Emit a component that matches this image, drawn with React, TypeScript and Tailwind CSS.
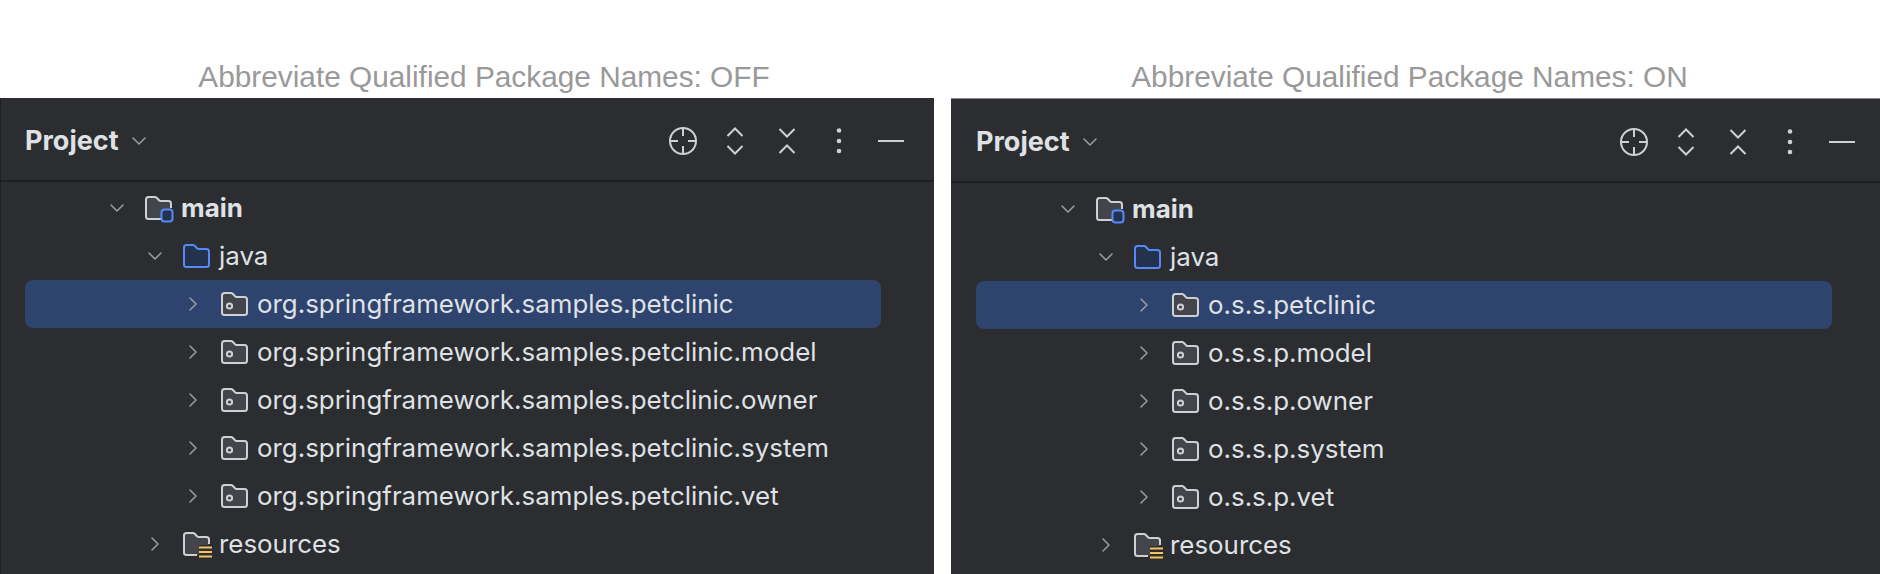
import { ChevronDown, ChevronRight } from "lucide-react";

type Row = {
  label: string;
  depth: number;
  open?: boolean;
  kind: "module" | "source" | "package" | "resources";
  selected?: boolean;
  bold?: boolean;
};

const INDENT: Record<number, string> = {
  0: "pl-[80px]",
  1: "pl-[118px]",
  2: "pl-[156px]",
};

function FolderOutline({ stroke, fill }: { stroke: string; fill: string }) {
  return (
    <path
      d="M3 7.5C3 6.1 4.1 5 5.5 5h6.4c.7 0 1.3.3 1.800.8l2.600 2.700c.4.4.9.5 1.400.5h7.800C27 9 28 10.100 28 11.500v13c0 1.400-1.100 2.500-2.500 2.500h-20C4.100 27 3 25.900 3 24.500z"
      stroke={stroke}
      fill={fill}
      strokeWidth="2"
    />
  );
}

function FolderIcon({ kind }: { kind: Row["kind"] }) {
  if (kind === "source") {
    return (
      <svg width="32" height="32" viewBox="0 0 32 32" fill="none">
        <FolderOutline stroke="#548af7" fill="#25324d" />
      </svg>
    );
  }
  if (kind === "package") {
    return (
      <svg width="32" height="32" viewBox="0 0 32 32" fill="none">
        <FolderOutline stroke="#ced0d6" fill="#43454a" />
        <circle cx="10.500" cy="18" r="2.600" stroke="#ced0d6" strokeWidth="2" />
      </svg>
    );
  }
  if (kind === "module") {
    return (
      <svg width="32" height="32" viewBox="0 0 32 32" fill="none">
        <path
          d="M3 7.500C3 6.100 4.100 5 5.500 5h6.400c.7 0 1.300.3 1.800.8l2.600 2.700c.4.4.9.5 1.400.5h7.800C27 9 28 10.100 28 11.500V17H19v10H5.500C4.100 27 3 25.900 3 24.500z"
          fill="#43454a"
        />
        <path
          d="M18 27H5.500C4.100 27 3 25.900 3 24.500v-17C3 6.100 4.100 5 5.500 5h6.400c.7 0 1.300.3 1.800.8l2.600 2.700c.4.4.9.5 1.400.5h7.800C27 9 28 10.100 28 11.500V16"
          stroke="#ced0d6"
          strokeWidth="2"
        />
        <rect x="18.500" y="17.500" width="11" height="12" rx="3" fill="#25324d" stroke="#548af7" strokeWidth="2" />
      </svg>
    );
  }
  return (
    <svg width="32" height="32" viewBox="0 0 32 32" fill="none">
      <path
        d="M3 7.500C3 6.100 4.100 5 5.500 5h6.400c.7 0 1.300.3 1.800.8l2.600 2.700c.4.4.9.5 1.400.5h7.800C27 9 28 10.100 28 11.500V17H18v10H5.500C4.100 27 3 25.900 3 24.500z"
        fill="#43454a"
      />
      <path
        d="M16 27H5.500C4.100 27 3 25.900 3 24.500v-17C3 6.100 4.100 5 5.500 5h6.400c.7 0 1.300.3 1.800.8l2.600 2.700c.4.4.9.5 1.400.5h7.800C27 9 28 10.100 28 11.500V16"
        stroke="#ced0d6"
        strokeWidth="2"
      />
      <path d="M18 19.500h13M18 24h13M18 28.500h13" stroke="#f2c55c" strokeWidth="2.200" />
    </svg>
  );
}

function TreeRow({ row }: { row: Row }) {
  const Chevron = row.open ? ChevronDown : ChevronRight;
  return (
    <div
      className={`ml-[25px] mr-[53px] flex h-[48px] items-center rounded-lg ${INDENT[row.depth]} ${
        row.selected ? "bg-[#2e436e]" : ""
      }`}
    >
      <Chevron size={24} strokeWidth={1.5} className="shrink-0 text-[#9a9da4]" />
      <span className="ml-[14px] shrink-0">
        <FolderIcon kind={row.kind} />
      </span>
      <span
        className={`ml-[6px] whitespace-nowrap text-[25.9px] text-[#dfe1e5] ${row.bold ? "font-bold" : "font-normal"}`}
      >
        {row.label}
      </span>
    </div>
  );
}

function HeaderIcons() {
  return (
    <div className="flex items-center text-[#ced0d6]">
      <svg width="52" height="32" viewBox="0 0 52 32" fill="none" stroke="currentColor" strokeWidth="2">
        <circle cx="26" cy="16" r="13" />
        <path d="M26 3v8M26 21v8M13 16h8M31 16h8" />
      </svg>
      <svg width="52" height="32" viewBox="0 0 52 32" fill="none" stroke="currentColor" strokeWidth="2">
        <path d="M18.500 11 26 3.500 33.500 11M18.500 21 26 28.500 33.500 21" />
      </svg>
      <svg width="52" height="32" viewBox="0 0 52 32" fill="none" stroke="currentColor" strokeWidth="2">
        <path d="M18.500 4 26 11.500 33.500 4M18.500 28 26 20.500 33.500 28" />
      </svg>
      <svg width="52" height="32" viewBox="0 0 52 32" fill="currentColor">
        <circle cx="26" cy="5.500" r="2.300" />
        <circle cx="26" cy="16" r="2.300" />
        <circle cx="26" cy="26" r="2.300" />
      </svg>
      <svg width="52" height="32" viewBox="0 0 52 32" fill="none" stroke="currentColor" strokeWidth="2">
        <path d="M13 16h26" />
      </svg>
    </div>
  );
}

function ProjectPanel({ rows, caption, captionClass, panelClass }: {
  rows: Row[];
  caption: string;
  captionClass: string;
  panelClass: string;
}) {
  return (
    <div className="w-[934px] shrink-0">
      <div
        className={`flex h-[98px] items-end justify-center pb-px text-[29.8px] leading-[41px] text-[#999999] [font-family:'Liberation_Sans',Arial,sans-serif] ${captionClass}`}
      >
        {caption}
      </div>
      <div className={`h-[476px] overflow-hidden bg-[#2b2d30] ${panelClass}`}>
        <div className="flex h-[84px] items-center justify-between border-b-2 border-[#1e1f22] pl-[25px] pr-[17px] pt-[4px]">
          <div className="flex items-center gap-[8px]">
            <span className="text-[27px] font-bold text-[#dfe1e5]">Project</span>
            <ChevronDown size={24} strokeWidth={1.5} className="text-[#9a9da4]" />
          </div>
          <HeaderIcons />
        </div>
        <div className="pt-[2px]">
          {rows.map((row) => (
            <TreeRow key={row.label} row={row} />
          ))}
        </div>
      </div>
    </div>
  );
}

const makeRows = (names: string[]): Row[] => [
  { label: "main", depth: 0, open: true, kind: "module", bold: true },
  { label: "java", depth: 1, open: true, kind: "source" },
  ...names.map((label, i) => ({ label, depth: 2, kind: "package" as const, selected: i === 0 })),
  { label: "resources", depth: 1, kind: "resources" },
];

export default function App() {
  return (
    <div className="flex h-[574px] w-[1880px] gap-[17px] overflow-hidden bg-white [font-family:Inter,sans-serif]">
      <ProjectPanel
        caption="Abbreviate Qualified Package Names: OFF"
        captionClass="pl-[34px]"
        panelClass="shadow-[inset_1px_0_0_#1e1f22]"
        rows={makeRows([
          "org.springframework.samples.petclinic",
          "org.springframework.samples.petclinic.model",
          "org.springframework.samples.petclinic.owner",
          "org.springframework.samples.petclinic.system",
          "org.springframework.samples.petclinic.vet",
        ])}
      />
      <ProjectPanel
        caption="Abbreviate Qualified Package Names: ON"
        captionClass="pr-[17px]"
        panelClass="border-t border-[#8c8d90]"
        rows={makeRows([
          "o.s.s.petclinic",
          "o.s.s.p.model",
          "o.s.s.p.owner",
          "o.s.s.p.system",
          "o.s.s.p.vet",
        ])}
      />
    </div>
  );
}
